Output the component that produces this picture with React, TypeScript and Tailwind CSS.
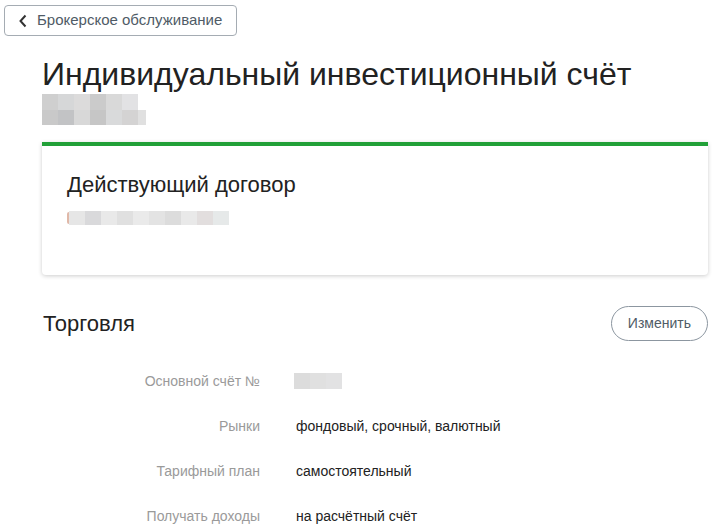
import React from 'react';

const mosaicTop = ['#cfcfcf', '#d6d7d8', '#dcdbdb', '#cbcbcb', '#d9d9d9', '#e2e2e4'];
const mosaicBottom = ['#c9c9c9', '#c2c3c5', '#d8d8d8', '#c6c6c6', '#d9dadb', '#d4d3d3', '#e0e0e0'];
const contractMosaic = ['#e6e6e6', '#d9d9db', '#e9e9e9', '#e0e0e0', '#eaeaea', '#e3e3e3', '#dcdcdc', '#e9e9e9', '#e2dede', '#e6e9e9'];

const rows = [
  { label: 'Рынки', value: 'фондовый, срочный, валютный' },
  { label: 'Тарифный план', value: 'самостоятельный' },
  { label: 'Получать доходы', value: 'на расчётный счёт' },
];

export default function App() {
  return (
    <div className="min-h-[530px] bg-white text-[#333] font-['Liberation_Sans',Arial,sans-serif]">
      <div className="pt-[5px] pl-[4px]">
        <button className="flex items-center gap-[9px] h-[31px] pl-[13px] pr-[14px] border border-[#a5acb3] rounded-[4px] text-[15px] text-[#4f5b66] bg-white">
          <svg width="10" height="14" viewBox="0 0 10 14">
            <path d="M7.5 1.5 L2.5 7 L7.5 12.5" fill="none" stroke="#333" strokeWidth="2" />
          </svg>
          Брокерское обслуживание
        </button>
      </div>

      <div className="pl-[42px] pr-[10px]">
        <h1 className="mt-[20px] text-[32px] leading-[37px] text-[#222]">Индивидуальный инвестиционный счёт</h1>
        <div className="mt-[1px] w-[105px]">
          <div className="flex">
            {mosaicTop.map((c, i) => (
              <div key={i} className="w-[16px] h-[16px]" style={{ backgroundColor: c }} />
            ))}
          </div>
          <div className="flex">
            {mosaicBottom.map((c, i) => (
              <div key={i} className={i === 6 ? 'w-[8px] h-[15px]' : 'w-[16px] h-[15px]'} style={{ backgroundColor: c }} />
            ))}
          </div>
        </div>

        <div className="mt-[17px] w-[666px] h-[133px] bg-white border-t-4 border-[#21a038] rounded-b-[4px] shadow-[0_1px_4px_rgba(0,0,0,0.2)] pl-[25px] pt-[26px]">
          <div className="text-[22px] leading-[26px] text-[#222]">Действующий договор</div>
          <div className="mt-[13px] flex items-center">
            <div className="w-[2px] h-[12px] rounded-l-full bg-[#e0b8a8]" />
            {contractMosaic.map((c, i) => (
              <div key={i} className="w-[16px] h-[14px]" style={{ backgroundColor: c }} />
            ))}
          </div>
        </div>

        <div className="mt-[31px] w-[666px] flex items-center justify-between">
          <div className="text-[22px] leading-[26px] text-[#222] pl-[1px]">Торговля</div>
          <button className="h-[35px] px-[16px] rounded-full border border-[#8c96a0] text-[14px] text-[#4f5b66] bg-white">
            Изменить
          </button>
        </div>

        <div className="mt-[31px] grid grid-cols-[218px_1fr] gap-x-[36px] gap-y-[27px] text-[14px] leading-[18px]">
          <div className="text-right text-[#9a9a9a]">Основной счёт №</div>
          <div className="flex pt-[1px] -ml-[2px]">
            <div className="w-[16px] h-[16px] bg-[#dcdcdc]" />
            <div className="w-[16px] h-[16px] bg-[#e0e0e0]" />
            <div className="w-[16px] h-[16px] bg-[#e2e2e3]" />
          </div>
          {rows.map((r) => (
            <React.Fragment key={r.label}>
              <div className="text-right text-[#9a9a9a]">{r.label}</div>
              <div className="text-[#222]">{r.value}</div>
            </React.Fragment>
          ))}
        </div>
      </div>
    </div>
  );
}
